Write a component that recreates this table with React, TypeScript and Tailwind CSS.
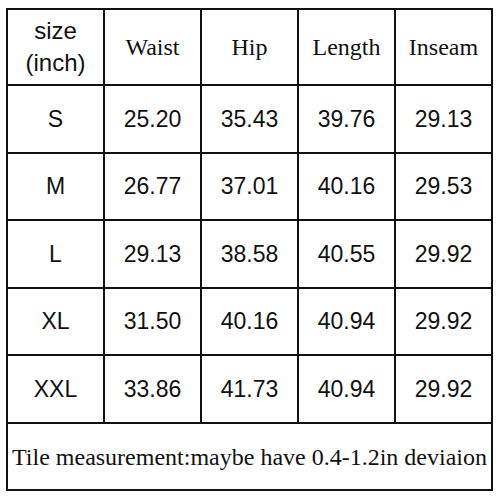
const rows = [
  ['S', '25.20', '35.43', '39.76', '29.13'],
  ['M', '26.77', '37.01', '40.16', '29.53'],
  ['L', '29.13', '38.58', '40.55', '29.92'],
  ['XL', '31.50', '40.16', '40.94', '29.92'],
  ['XXL', '33.86', '41.73', '40.94', '29.92'],
]

const heads = ['Waist', 'Hip', 'Length', 'Inseam']

const App = () => {
  return (
    <div className="w-[500px] h-[500px] bg-white pl-[6px] pt-[8px]">
      <div className="w-[487px] bg-[#111] p-[2px] grid grid-cols-5 gap-[2px] grid-rows-[74px_66px_65px_66px_65px_66px_65px] text-[#111]">
        <div className="bg-white flex flex-col items-center justify-center font-['Liberation_Sans',Arial,sans-serif] text-[24px] leading-[32px]">
          <span>size</span>
          <span>(inch)</span>
        </div>
        {heads.map((h) => (
          <div key={h} className="bg-white flex items-center justify-center font-['Liberation_Serif','Times_New_Roman',serif] text-[24px]">
            {h}
          </div>
        ))}
        {rows.map((r) =>
          r.map((c, i) => (
            <div key={r[0] + i} className="bg-white flex items-center justify-center font-['Liberation_Sans',Arial,sans-serif] text-[23px]">
              {c}
            </div>
          ))
        )}
        <div className="col-span-5 bg-white flex items-center justify-center font-['Liberation_Serif','Times_New_Roman',serif] text-[24px] whitespace-nowrap">
          Tile measurement:maybe have 0.4-1.2in deviaion
        </div>
      </div>
    </div>
  )
}

export default App
